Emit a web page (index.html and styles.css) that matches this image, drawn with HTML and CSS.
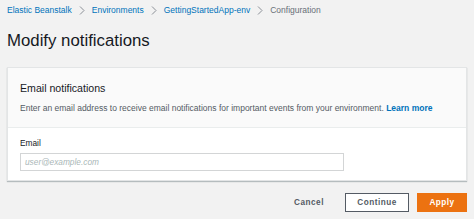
FILE: index.html
```html
<!DOCTYPE html>
<html>
<head>
<meta charset="utf-8">
<link rel="stylesheet" href="styles.css">
</head>
<body>
<div class="page">
  <nav class="crumbs">
    <a class="crumb-link">Elastic Beanstalk</a>
    <span class="sep"><svg width="6" height="9" viewBox="0 0 6 9"><path d="M1 0.5 L5 4.5 L1 8.5" fill="none" stroke="#8a8f96" stroke-width="1"/></svg></span>
    <a class="crumb-link">Environments</a>
    <span class="sep"><svg width="6" height="9" viewBox="0 0 6 9"><path d="M1 0.5 L5 4.5 L1 8.5" fill="none" stroke="#8a8f96" stroke-width="1"/></svg></span>
    <a class="crumb-link">GettingStartedApp-env</a>
    <span class="sep"><svg width="6" height="9" viewBox="0 0 6 9"><path d="M1 0.5 L5 4.5 L1 8.5" fill="none" stroke="#8a8f96" stroke-width="1"/></svg></span>
    <span class="crumb-current">Configuration</span>
  </nav>
  <h1 class="title">Modify notifications</h1>
  <section class="card">
    <div class="card-header">
      <h2 class="card-title">Email notifications</h2>
      <p class="card-desc">Enter an email address to receive email notifications for important events from your environment. <a class="learn">Learn more</a></p>
    </div>
    <div class="card-body">
      <label class="field-label">Email</label>
      <div class="input">user@example.com</div>
    </div>
  </section>
  <div class="actions">
    <button class="btn btn-link">Cancel</button>
    <button class="btn btn-normal">Continue</button>
    <button class="btn btn-primary">Apply</button>
  </div>
</div>
</body>
</html>
```
FILE: styles.css
```css
html, body {
  margin: 0;
  padding: 0;
  background: #f2f2f2;
}
body {
  font-family: "Liberation Sans", Arial, sans-serif;
  color: #16191f;
}
.page {
  padding: 5px 7px 0 7px;
}
.crumbs {
  display: flex;
  align-items: center;
  height: 11px;
  font-size: 8.5px;
  line-height: 11px;
}
.crumb-link {
  color: #0073bb;
}
.crumb-current {
  color: #687078;
}
.sep {
  display: flex;
  align-items: center;
  margin: 0 7px 0 7px;
}
.title {
  margin: 14px 0 0 0;
  font-size: 16.8px;
  line-height: 22px;
  height: 22px;
  font-weight: normal;
  color: #16191f;
}
.card {
  margin-top: 15px;
  background: #ffffff;
  border: 1px solid #e3e5e6;
  box-shadow: 0 1px 1px 0 rgba(0,28,36,0.25);
}
.card-header {
  background: #fafafa;
  border-bottom: 1px solid #eaeded;
  padding: 13px 12px 0 12px;
  height: 46px;
}
.card-title {
  margin: 0;
  font-size: 10.6px;
  line-height: 14px;
  font-weight: normal;
  color: #16191f;
}
.card-desc {
  margin: 7px 0 0 0;
  font-size: 8.5px;
  line-height: 12px;
  color: #545b64;
}
.learn {
  color: #0073bb;
  font-weight: bold;
}
.card-body {
  padding: 10px 12px 0 12px;
  height: 42px;
}
.field-label {
  display: block;
  font-size: 8.3px;
  line-height: 11px;
  color: #16191f;
}
.input {
  margin-top: 4px;
  width: 314px;
  height: 16px;
  border: 1px solid #d3d5d6;
  background: #fff;
  padding: 0 4px;
  font-size: 8.3px;
  line-height: 16px;
  font-style: italic;
  color: #aab7b8;
}
.actions {
  display: flex;
  justify-content: flex-end;
  align-items: center;
  margin-top: 12px;
}
.btn {
  font-family: "Liberation Sans", Arial, sans-serif;
  font-size: 8.2px;
  font-weight: bold;
  letter-spacing: 0.5px;
  height: 19px;
  padding: 0;
  cursor: pointer;
}
.btn-link {
  background: none;
  border: none;
  color: #545b64;
  width: 36px;
  margin-right: 18px;
}
.btn-normal {
  background: #fff;
  border: 1px solid #545b64;
  color: #545b64;
  width: 64px;
  margin-right: 8px;
}
.btn-primary {
  background: #ec7211;
  border: 1px solid #ec7211;
  color: #fff;
  width: 50px;
}
```
